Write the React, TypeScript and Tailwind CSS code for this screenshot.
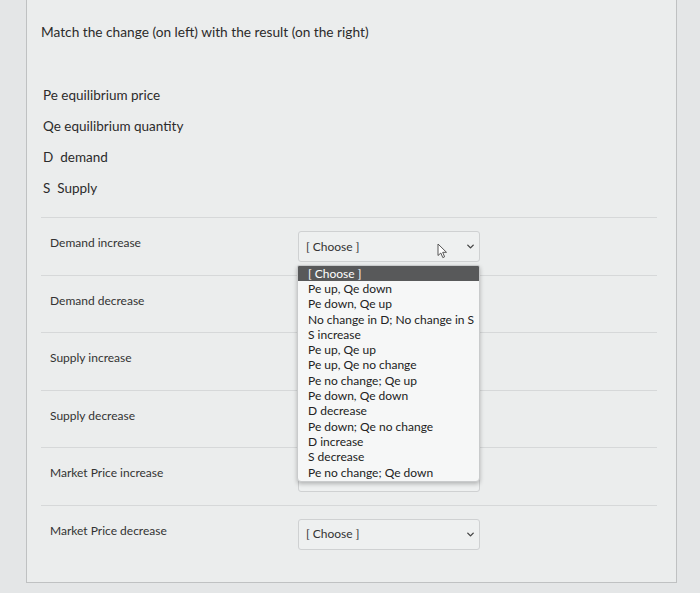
import { ChevronDown } from 'lucide-react';

const legend = [
  { key: 'Pe', text: 'equilibrium price' },
  { key: 'Qe', text: 'equilibrium quantity' },
  { key: 'D', text: ' demand' },
  { key: 'S', text: ' Supply' },
];

const changes = [
  'Demand increase',
  'Demand decrease',
  'Supply increase',
  'Supply decrease',
  'Market Price increase',
  'Market Price decrease',
];

const options = [
  '[ Choose ]',
  'Pe up, Qe down',
  'Pe down, Qe up',
  'No change in D; No change in S',
  'S increase',
  'Pe up, Qe up',
  'Pe up, Qe no change',
  'Pe no change; Qe up',
  'Pe down, Qe down',
  'D decrease',
  'Pe down; Qe no change',
  'D increase',
  'S decrease',
  'Pe no change; Qe down',
];

function Cursor() {
  return (
    <svg width="11" height="16" viewBox="0 0 11 16" className="absolute left-[138px] top-[11px]">
      <path d="M1 1 L1 12.5 L3.8 10 L5.8 14.6 L7.6 13.8 L5.7 9.3 L9.5 9.3 Z" fill="#fff" stroke="#555" strokeWidth="1" strokeLinejoin="round" />
    </svg>
  );
}

function SelectBox({ open, hidden }: { open?: boolean; hidden?: boolean }) {
  return (
    <div className="relative w-[182px]">
      <div className="relative h-[31px] border border-[#cfd1d2] bg-[#eef0f0] rounded-[3px] flex items-center pl-[7px] pr-[3px] text-[12px] text-[#333]">
        {!hidden && <span className="flex-1">[ Choose ]</span>}
        {!hidden && <ChevronDown size={11} strokeWidth={3} className="text-[#444]" />}
        {open && <Cursor />}
      </div>
      {open && (
        <div className="absolute -left-px top-[34px] z-10 w-[183px] bg-[#f6f7f7] border border-[#c9cbcc] rounded-b-[4px] rounded-t-[2px] shadow-[0_2px_4px_rgba(0,0,0,0.25)] pb-[1px] overflow-hidden">
          {options.map((o, i) => (
            <div
              key={o}
              className={
                i === 0
                  ? 'h-[15px] leading-[15px] bg-[#58595a] text-white text-[12px] pl-[10px]'
                  : 'h-[15.3px] leading-[15.3px] text-[#222] text-[12px] pl-[10px] whitespace-nowrap'
              }
            >
              {o}
            </div>
          ))}
        </div>
      )}
    </div>
  );
}

export default function App() {
  return (
    <div className="min-h-[593px] bg-[#e4e6e7] pl-[26px] pr-[23px] overflow-hidden font-['Lato','Liberation_Sans',sans-serif]">
      <div className="border-x border-b border-[#bfc1c2] bg-[#ebeded] pb-[19px]">
        <div className="pl-[14px] pt-[22px] text-[13.7px] leading-5 text-[#2b2b2b]">
          Match the change (on left) with the result (on the right)
        </div>
        <div className="pl-[16px] mt-[43px] text-[13.5px] text-[#2b2b2b]">
          {legend.map(l => (
            <div key={l.key} className="leading-5 mb-[11px]">
              {l.key}&nbsp;{l.text}
            </div>
          ))}
        </div>
        <div className="ml-[14px] mr-[19px] mt-[19px]">
          {changes.map((c, i) => (
            <div key={c} className="h-[57.6px] border-t border-[#d6d8d9] flex items-start pt-[13px]">
              <div className="w-[257px] pl-[9px] pt-[4px] text-[12px] leading-4 text-[#333]">{c}</div>
              <SelectBox open={i === 0} hidden={i > 0 && i < 5} />
            </div>
          ))}
        </div>
      </div>
    </div>
  );
}
